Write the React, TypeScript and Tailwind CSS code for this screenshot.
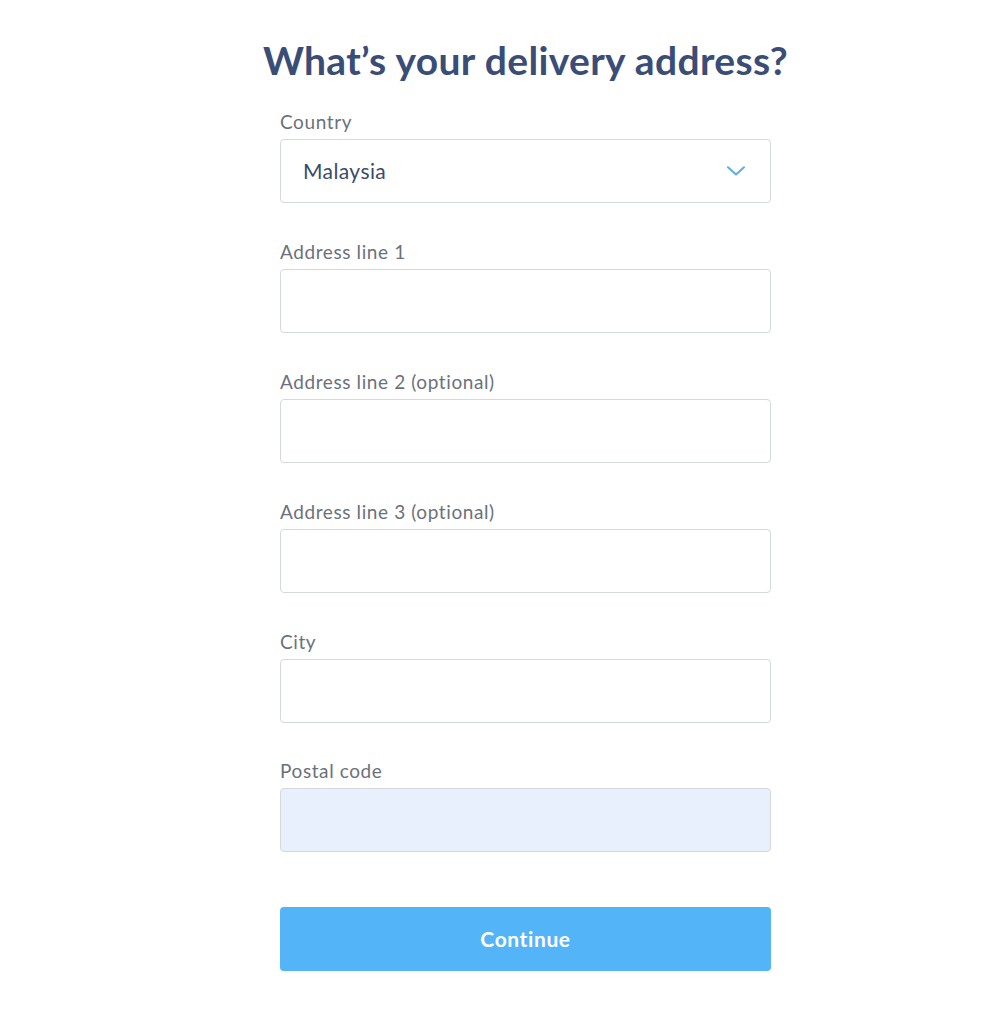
// ── Field ──────────────────────────────────────────────────────────────────────

interface FieldProps {
  label: string
  autofilled?: boolean
}

function Field({ label, autofilled }: FieldProps) {
  return (
    <label className="flex flex-col gap-[5px]">
      <span className="text-[19px] leading-6 text-[#6b717c] tracking-[0.6px]">{label}</span>
      <input
        type="text"
        className={`h-16 w-full rounded-[4px] border border-[#d5d8dd] px-[22px] text-[20px] text-[#3b4a69] outline-none ${
          autofilled ? 'bg-[#e8f0fe]' : 'bg-white'
        }`}
      />
    </label>
  )
}

// ── Page ───────────────────────────────────────────────────────────────────────

const FIELDS = ['Address line 1', 'Address line 2 (optional)', 'Address line 3 (optional)', 'City']

export default function App() {
  return (
    <div
      className="min-h-screen bg-white flex justify-center"
      style={{ fontFamily: 'Lato, "Open Sans", sans-serif' }}
    >
      <div className="w-[491px] ml-[50px] pt-[34px] pb-12 flex flex-col">
        <h1 className="text-center text-[39px] leading-[52px] font-bold text-[#3a4d77] whitespace-nowrap -mx-10 tracking-[0.35px]">
          What’s your delivery address?
        </h1>

        <div className="mt-[24px] flex flex-col gap-[37px]">
          {/* Country select */}
          <label className="flex flex-col gap-[5px]">
            <span className="text-[19px] leading-6 text-[#6b717c] tracking-[0.6px]">Country</span>
            <div className="h-16 w-full rounded-[4px] border border-[#d5d8dd] bg-white pl-[22px] pr-[24px] flex items-center justify-between">
              <span className="text-[21px] text-[#3b4a69] tracking-[0.4px]">Malaysia</span>
              <svg width="18" height="10" viewBox="0 0 18 10" fill="none" className="mr-[1px]">
                <path
                  d="M1 1.2L9 8.5L17 1.2"
                  stroke="#5aaee3"
                  strokeWidth="2"
                  strokeLinecap="round"
                  strokeLinejoin="round"
                />
              </svg>
            </div>
          </label>

          {FIELDS.map((f) => (
            <Field key={f} label={f} />
          ))}

          <div className="-mt-px">
            <Field label="Postal code" autofilled />
          </div>
        </div>

        <button
          type="button"
          className="mt-[55px] h-16 w-full rounded-[4px] bg-[#53b5f7] text-white text-[21px] font-bold tracking-[0.6px]"
        >
          Continue
        </button>
      </div>
    </div>
  )
}
